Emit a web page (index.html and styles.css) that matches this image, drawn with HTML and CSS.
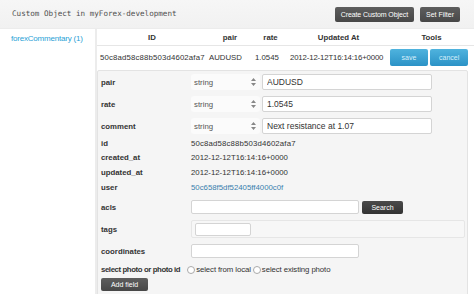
FILE: index.html
```html
<!DOCTYPE html>
<html lang="en">
<head>
    <meta charset="UTF-8">
    <title>Custom Object</title>
    <link rel="stylesheet" href="styles.css">
</head>
<body>
    <header class="top-bar">
        <div class="top-title">Custom Object in myForex-development</div>
        <div class="top-actions">
            <button class="btn btn-dark btn-create">Create Custom Object</button>
            <button class="btn btn-dark">Set Filter</button>
        </div>
    </header>

    <div class="layout">
        <aside class="sidebar">
            <a class="class-link">forexCommentary (1)</a>
        </aside>

        <main class="content">
            <table class="obj-table">
                <colgroup>
                    <col class="col-id">
                    <col class="col-pair">
                    <col class="col-rate">
                    <col class="col-upd">
                    <col>
                </colgroup>
                <thead>
                    <tr>
                        <th>ID</th>
                        <th>pair</th>
                        <th>rate</th>
                        <th>Updated At</th>
                        <th>Tools</th>
                    </tr>
                </thead>
                <tbody>
                    <tr>
                        <td class="oid">50c8ad58c88b503d4602afa7</td>
                        <td>AUDUSD</td>
                        <td>1.0545</td>
                        <td class="date">2012-12-12T16:14:16+0000</td>
                        <td class="tools">
                            <button class="btn btn-info">save</button>
                            <button class="btn btn-info">cancel</button>
                        </td>
                    </tr>
                </tbody>
            </table>

            <div class="edit-panel">
                <div class="field field-input">
                    <label>pair</label>
                    <div class="value">
                        <div class="type-select">string
                            <svg width="5" height="8" viewBox="0 0 5 8"><path d="M2.5 0L5 3H0z M2.5 8L0 5h5z" fill="#888"/></svg>
                        </div>
                        <input class="text-in wide" value="AUDUSD">
                    </div>
                </div>
                <div class="field field-input">
                    <label>rate</label>
                    <div class="value">
                        <div class="type-select">string
                            <svg width="5" height="8" viewBox="0 0 5 8"><path d="M2.5 0L5 3H0z M2.5 8L0 5h5z" fill="#888"/></svg>
                        </div>
                        <input class="text-in wide" value="1.0545">
                    </div>
                </div>
                <div class="field field-input">
                    <label>comment</label>
                    <div class="value">
                        <div class="type-select">string
                            <svg width="5" height="8" viewBox="0 0 5 8"><path d="M2.5 0L5 3H0z M2.5 8L0 5h5z" fill="#888"/></svg>
                        </div>
                        <input class="text-in wide" value="Next resistance at 1.07">
                    </div>
                </div>
                <div class="field field-text first-text">
                    <label>id</label>
                    <div class="value oid">50c8ad58c88b503d4602afa7</div>
                </div>
                <div class="field field-text">
                    <label>created_at</label>
                    <div class="value">2012-12-12T16:14:16+0000</div>
                </div>
                <div class="field field-text">
                    <label>updated_at</label>
                    <div class="value">2012-12-12T16:14:16+0000</div>
                </div>
                <div class="field field-text">
                    <label>user</label>
                    <div class="value"><a class="user-link">50c658f5df52405ff4000c0f</a></div>
                </div>
                <div class="field field-acls">
                    <label>acls</label>
                    <div class="value">
                        <input class="text-in medium">
                        <button class="btn btn-dark btn-search">Search</button>
                    </div>
                </div>
                <div class="field field-tags">
                    <label>tags</label>
                    <div class="value">
                        <div class="tags-box"><input class="text-in small"></div>
                    </div>
                </div>
                <div class="field field-coords">
                    <label>coordinates</label>
                    <div class="value"><input class="text-in medium"></div>
                </div>
                <div class="field field-photo">
                    <label>select photo or photo id</label>
                    <div class="value radios">
                        <span class="radio"></span>select from local
                        <span class="radio"></span>select existing photo
                    </div>
                </div>
                <button class="btn btn-dark btn-add">Add field</button>
            </div>
        </main>
    </div>
</body>
</html>
```

FILE: styles.css
```css
body {
    margin: 0;
    font-family: "Liberation Sans", Arial, sans-serif;
    font-size: 7.8px;
    color: #333;
    background: #fff;
    overflow: hidden;
}

.top-bar {
    display: flex;
    justify-content: space-between;
    align-items: center;
    height: 28px;
    padding: 0 14px 0 12px;
    background: linear-gradient(#f6f6f6, #f1f1f1);
    border-bottom: 1px solid #ececec;
}
.top-title {
    font-family: "DejaVu Sans Mono", monospace;
    font-size: 7.6px;
    color: #505050;
    margin-top: -1px;
}
.top-actions {
    display: flex;
    gap: 6px;
}

.btn {
    font-family: "Liberation Sans", Arial, sans-serif;
    font-size: 7px;
    color: #fff;
    border: none;
    border-radius: 2px;
    padding: 0;
    cursor: pointer;
}
.btn-dark {
    background: linear-gradient(#5e5e5e, #474747);
    height: 15px;
    padding: 0 6px;
}
.btn-create {
    letter-spacing: -0.1px;
}
.btn-info {
    background: linear-gradient(#4fb3de, #2b92c6);
    width: 38px;
    height: 17px;
    color: #d8f0fb;
}

.layout {
    display: flex;
}
.sidebar {
    width: 95px;
    border-right: 2px solid #ececec;
    padding-top: 5px;
    height: 270px;
}
.class-link {
    display: block;
    padding-left: 11px;
    font-size: 8px;
    color: #2a9fd6;
    letter-spacing: -0.2px;
}

.content {
    flex: 1;
}

.obj-table {
    border-collapse: collapse;
    width: 100%;
    table-layout: fixed;
}
.col-id { width: 110px; }
.col-pair { width: 46px; }
.col-rate { width: 35px; }
.col-upd { width: 101px; }
.obj-table th {
    font-weight: bold;
    text-align: center;
    height: 16px;
    padding: 0;
    border-bottom: 1px solid #e6e6e6;
}
.obj-table td {
    height: 22px;
    padding: 0 0 0 2px;
    white-space: nowrap;
    overflow: visible;
}
.obj-table td.oid {
    padding-left: 3px;
}
.obj-table td.tools {
    padding-left: 1px;
}
.oid {
    letter-spacing: 0.15px;
}
.date {
    letter-spacing: -0.15px;
}

.edit-panel {
    margin-top: 2px;
    margin-right: 6px;
    background: #f5f5f5;
    border: 1px solid #e3e3e3;
    border-radius: 2px;
    padding: 0 0 4px 3px;
}

.field {
    display: flex;
    align-items: center;
}
.field label {
    width: 90px;
    font-weight: bold;
    white-space: nowrap;
}
.field .value {
    display: flex;
    align-items: center;
    flex: 1;
}
.field-input { height: 22px; }
.field-text { height: 15px; }
.first-text { height: 13px; }
.field-acls { height: 24px; }
.field-tags { height: 20px; }
.field-coords { height: 24px; }
.field-photo { height: 13px; }

.type-select {
    display: flex;
    justify-content: space-between;
    align-items: center;
    width: 62px;
    height: 16px;
    padding: 0 4px 0 3px;
    background: #fbfbfb;
    border-radius: 3px;
    color: #555;
}
.text-in {
    height: 14px;
    border: 1px solid #d4d4d4;
    border-radius: 2px;
    background: #fff;
    padding: 0 4px;
    font-family: "Liberation Sans", Arial, sans-serif;
    font-size: 8px;
    color: #333;
    box-sizing: border-box;
}
.text-in.wide {
    width: 170px;
    height: 16px;
    margin-left: 2px;
    font-size: 8.5px;
}
.text-in.medium {
    width: 168px;
}
.text-in.small {
    width: 56px;
    height: 13px;
}
.btn-search {
    margin-left: 3px;
    width: 41px;
    height: 13px;
    background: linear-gradient(#4a4a4a, #333);
    font-size: 7px;
}
.tags-box {
    flex: 1;
    height: 16px;
    margin-right: 2px;
    padding-left: 3px;
    display: flex;
    align-items: center;
    border: 1px solid #e6e6e6;
    border-radius: 2px;
    background: #f7f7f7;
}

.user-link {
    color: #3a7fae;
}

.field-photo label {
    width: auto;
    margin-right: 5px;
    letter-spacing: -0.4px;
}
.radios {
    white-space: nowrap;
    letter-spacing: -0.1px;
}
.radio {
    display: inline-block;
    width: 6px;
    height: 6px;
    border: 1px solid #aaa;
    border-radius: 50%;
    background: #fff;
    margin: 0 1px 0 2px;
}

.btn-add {
    margin-top: 2px;
    width: 47px;
    height: 13px;
    font-size: 7px;
}
```
